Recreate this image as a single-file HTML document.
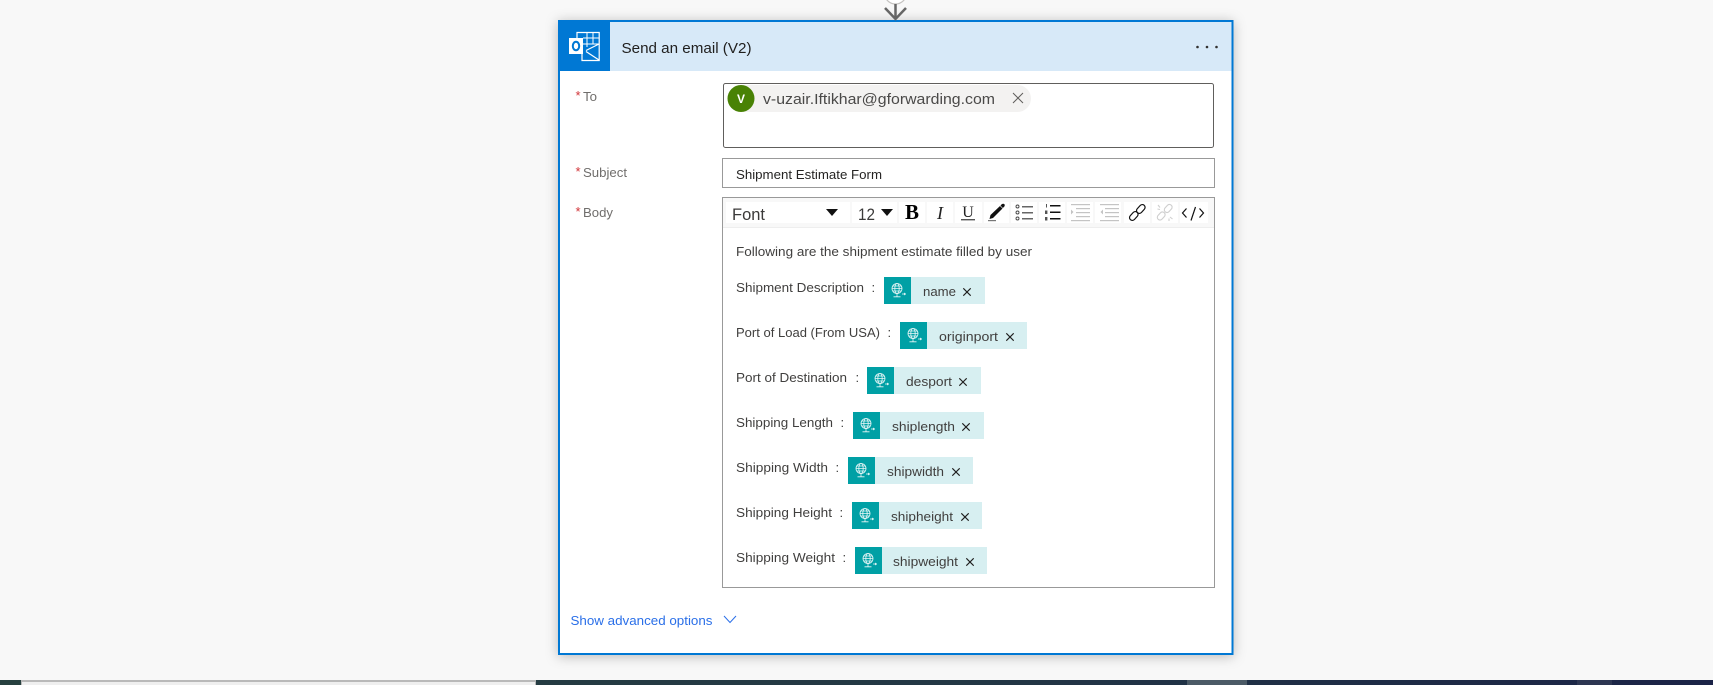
<!DOCTYPE html>
<html lang="en">
<head>
<meta charset="utf-8">
<title>Send an email (V2)</title>
<style>
html,body{margin:0;padding:0;width:1713px;height:685px;overflow:hidden;background:#f8f8f8}
svg{display:block}
text{font-family:"Liberation Sans",Arial,sans-serif;fill:#403f3e;font-size:13px}
</style>
</head>
<body>
<svg width="1713" height="685" viewBox="0 0 1713 685" xmlns="http://www.w3.org/2000/svg">
<defs>
<filter id="sh" x="-10%" y="-10%" width="120%" height="120%"><feDropShadow dx="0" dy="1.5" stdDeviation="6" flood-color="#000" flood-opacity=".26"/></filter>
<linearGradient id="bar" x1="0" x2="1"><stop offset="0" stop-color="#27403f"/><stop offset=".55" stop-color="#233845"/><stop offset="1" stop-color="#1b2347"/></linearGradient>
<g id="globe" fill="none" stroke="#fff" stroke-width=".8" opacity=".92">
<circle cx="0" cy="-1.5" r="5"/><ellipse cx="0" cy="-1.5" rx="2.2" ry="5"/><path d="M-5-1.5H5M-4.2-4H4.2M-4.2 1H4.2M0 3.5V6.5M-3.5 6.8H3.5M5 4H8.5M7.2 2.9L8.5 4L7.2 5.1"/>
</g>
<g id="x" fill="none" stroke="#201f1e" stroke-width="1.1"><path d="M-3.7-3.7L3.7 3.7M3.7-3.7L-3.7 3.7"/></g>
</defs>
<rect width="1713" height="685" fill="#f8f8f8"/>

<!-- connector -->
<circle cx="895.5" cy="-7" r="11" fill="#fff" stroke="#c4c2c0" stroke-width="1.2"/>

<!-- card -->
<rect x="559" y="21" width="673.5" height="633" fill="#fff" stroke="#0078d4" stroke-width="2" filter="url(#sh)"/>
<path d="M895.5 4V19.5M885 8L895.5 19L906 8" fill="none" stroke="#666" stroke-width="2.5"/>
<rect x="610" y="22" width="621.5" height="49" fill="#d7e9f8"/>
<rect x="560" y="22" width="50" height="49" fill="#0078d4"/>

<!-- Outlook icon -->
<g fill="none" stroke="#fff" stroke-width="1.2">
<path d="M577 38V32.5H599.2V60.5H582V53"/>
<path d="M587 32.5V47M593 32.5V44.5M583 38H599M583 44H599" stroke-width="1"/>
<path d="M586 50.5L599 44M586 51.5L599 60"/>
</g>
<rect x="569" y="38" width="14" height="16" fill="#fff"/>
<ellipse cx="576" cy="46" rx="3.2" ry="4.2" fill="none" stroke="#0078d4" stroke-width="2"/>

<text x="621.5" y="53" style="font-size:14.5px;fill:#201f1e" textLength="130" lengthAdjust="spacingAndGlyphs">Send an email (V2)</text>
<g fill="#323130"><circle cx="1197.5" cy="47" r="1.3"/><circle cx="1207" cy="47" r="1.3"/><circle cx="1216.5" cy="47" r="1.3"/></g>

<!-- labels -->
<text x="575.5" y="100" style="font-size:13px;fill:#d13438">*</text>
<text x="583" y="101" style="fill:#706e6c" textLength="14" lengthAdjust="spacingAndGlyphs">To</text>
<text x="575.5" y="176" style="font-size:13px;fill:#d13438">*</text>
<text x="583" y="177" style="fill:#706e6c" textLength="44" lengthAdjust="spacingAndGlyphs">Subject</text>
<text x="575.5" y="216" style="font-size:13px;fill:#d13438">*</text>
<text x="583" y="217" style="fill:#706e6c" textLength="30" lengthAdjust="spacingAndGlyphs">Body</text>

<!-- To field -->
<rect x="723.5" y="83.5" width="490" height="64" rx="2" fill="#fff" stroke="#605e5c"/>
<rect x="727.5" y="85" width="303.5" height="27" rx="13.5" fill="#f3f2f1"/>
<circle cx="741" cy="98.5" r="13.5" fill="#498205"/>
<text x="741" y="103" text-anchor="middle" style="font-size:12px;font-weight:bold;fill:#fff">V</text>
<text x="763" y="104" style="font-size:15px;fill:#4a4948" textLength="232" lengthAdjust="spacingAndGlyphs">v-uzair.Iftikhar@gforwarding.com</text>
<path d="M1013 93L1023 103M1023 93L1013 103" fill="none" stroke="#605e5c" stroke-width="1"/>

<!-- Subject -->
<rect x="722.5" y="158.5" width="492" height="29" fill="#fff" stroke="#999"/>
<text x="736" y="179" style="font-size:13px;fill:#252423" textLength="146" lengthAdjust="spacingAndGlyphs">Shipment Estimate Form</text>

<!-- Body -->
<rect x="722.5" y="197.5" width="492" height="390" fill="#fff" stroke="#999"/>
<rect x="723" y="198" width="491" height="29" fill="#f8f8f8"/>
<rect x="723" y="227" width="491" height="1" fill="#eeeeee"/>
<g fill="#fff">
<rect x="726" y="202" width="124" height="21"/><rect x="852" y="202" width="45" height="21"/>
<rect x="899" y="202" width="26" height="21"/><rect x="927" y="202" width="26" height="21"/><rect x="955" y="202" width="27" height="21"/>
<rect x="984" y="202" width="25" height="21"/><rect x="1011" y="202" width="26" height="21"/><rect x="1039" y="202" width="26" height="21"/>
<rect x="1067" y="202" width="26" height="21"/><rect x="1095" y="202" width="26" height="21"/><rect x="1124" y="202" width="26" height="21"/>
<rect x="1152" y="202" width="26" height="21"/><rect x="1180" y="202" width="28" height="21"/>
</g>
<text x="732" y="220" style="font-size:17px;fill:#3b3a39" textLength="33" lengthAdjust="spacingAndGlyphs">Font</text>
<path d="M826 209H838L832 216Z" fill="#111"/>
<text x="858" y="220" style="font-size:17px;fill:#3b3a39" textLength="17" lengthAdjust="spacingAndGlyphs">12</text>
<path d="M881 209H893L887 216Z" fill="#111"/>
<text x="912" y="219" text-anchor="middle" style="font-family:'Liberation Serif',serif;font-size:21px;font-weight:bold;fill:#000">B</text>
<text x="940" y="219" text-anchor="middle" style="font-family:'Liberation Serif',serif;font-size:18px;font-style:italic;fill:#222">I</text>
<text x="968" y="217" text-anchor="middle" style="font-family:'Liberation Serif',serif;font-size:16px;fill:#222">U</text>
<rect x="961" y="219" width="14" height="1.4" fill="#555"/>
<!-- pencil -->
<path d="M990.5 215L1000 206L1002.5 208.5L993 218L989.5 219Z" fill="#111"/>
<path d="M1000.5 205.5L1002 204Q1003.5 203.3 1004.5 204.3Q1005.2 205.5 1004.2 206.8L1002.8 208Z" fill="#111"/>
<rect x="988" y="220" width="8" height="1.2" fill="#777"/>
<!-- bullets -->
<g fill="none" stroke="#444" stroke-width=".9"><circle cx="1017.5" cy="206.5" r="1.5"/><circle cx="1017.5" cy="212.5" r="1.5"/><circle cx="1017.5" cy="218.5" r="1.5"/></g>
<g fill="#666"><rect x="1022" y="206" width="11" height="1.5"/><rect x="1022" y="212" width="11" height="1.5"/><rect x="1022" y="218" width="11" height="1.5"/></g>
<!-- numbers -->
<g fill="#111"><rect x="1050" y="205" width="10.5" height="1.5"/><rect x="1050" y="211.5" width="10.5" height="1.5"/><rect x="1050" y="218" width="10.5" height="1.5"/></g>
<g fill="#555"><rect x="1046" y="204" width="1" height="3.5"/><rect x="1045" y="210.5" width="2.4" height="3.5"/><rect x="1045" y="217" width="2.4" height="3.5"/></g>
<!-- indent -->
<g fill="#c4c4c4"><rect x="1071" y="204" width="19" height="1.2"/><rect x="1076" y="208" width="14" height="1.2"/><rect x="1076" y="212" width="14" height="1.2"/><rect x="1076" y="216" width="14" height="1.2"/><rect x="1071" y="220" width="19" height="1.2"/>
<path d="M1071 209.5L1073.5 212L1071 214.5Z"/>
<rect x="1100" y="204" width="19" height="1.2"/><rect x="1105" y="208" width="14" height="1.2"/><rect x="1105" y="212" width="14" height="1.2"/><rect x="1105" y="216" width="14" height="1.2"/><rect x="1100" y="220" width="19" height="1.2"/>
<path d="M1103 209.5L1100.5 212L1103 214.5Z"/></g>
<!-- link -->
<g fill="none" stroke="#111" stroke-width="1.2">
<rect x="1138" y="204" width="5.6" height="10" rx="2.8" transform="rotate(42 1140.8 209)"/>
<rect x="1131" y="211" width="5.6" height="10" rx="2.8" transform="rotate(42 1133.8 216)"/>
</g>
<g fill="none" stroke="#cfcfcf" stroke-width="1.1">
<rect x="1165.5" y="204" width="5.4" height="9" rx="2.7" transform="rotate(42 1168.2 208.5)"/>
<rect x="1158.5" y="211.5" width="5.4" height="9" rx="2.7" transform="rotate(42 1161.2 216)"/>
<path d="M1158 205L1160 207.5M1170 217L1172.5 219M1157.5 209L1160 209.5M1169 221L1169 218.5"/>
</g>
<!-- code -->
<path d="M1186.5 208.5L1182.5 213L1186.5 217.5M1199.5 208.5L1203.5 213L1199.5 217.5M1195.5 207L1191 220.5" fill="none" stroke="#111" stroke-width="1.2"/>

<!-- body content -->
<text x="736" y="256" textLength="296" lengthAdjust="spacingAndGlyphs">Following are the shipment estimate filled by user</text>

<!-- rows -->
<text x="736" y="292" textLength="128" lengthAdjust="spacingAndGlyphs">Shipment Description</text><text x="871.5" y="292">:</text>
<rect x="884" y="277" width="101" height="27" fill="#d7eff1"/><rect x="884" y="277" width="27" height="27" fill="#00a0a5"/>
<use href="#globe" x="897" y="290"/><text x="923" y="296" textLength="33" lengthAdjust="spacingAndGlyphs">name</text><use href="#x" x="967" y="292"/>

<text x="736" y="337" textLength="144" lengthAdjust="spacingAndGlyphs">Port of Load (From USA)</text><text x="887.5" y="337">:</text>
<rect x="900" y="322" width="127" height="27" fill="#d7eff1"/><rect x="900" y="322" width="27" height="27" fill="#00a0a5"/>
<use href="#globe" x="913" y="335"/><text x="939" y="341" textLength="59" lengthAdjust="spacingAndGlyphs">originport</text><use href="#x" x="1010" y="337"/>

<text x="736" y="382" textLength="111" lengthAdjust="spacingAndGlyphs">Port of Destination</text><text x="855.5" y="382">:</text>
<rect x="867" y="367" width="114" height="27" fill="#d7eff1"/><rect x="867" y="367" width="27" height="27" fill="#00a0a5"/>
<use href="#globe" x="880" y="380"/><text x="906" y="386" textLength="46" lengthAdjust="spacingAndGlyphs">desport</text><use href="#x" x="963" y="382"/>

<text x="736" y="427" textLength="97" lengthAdjust="spacingAndGlyphs">Shipping Length</text><text x="840.5" y="427">:</text>
<rect x="853" y="412" width="131" height="27" fill="#d7eff1"/><rect x="853" y="412" width="27" height="27" fill="#00a0a5"/>
<use href="#globe" x="866" y="425"/><text x="892" y="431" textLength="63" lengthAdjust="spacingAndGlyphs">shiplength</text><use href="#x" x="966" y="427"/>

<text x="736" y="472" textLength="92" lengthAdjust="spacingAndGlyphs">Shipping Width</text><text x="835.5" y="472">:</text>
<rect x="848" y="457" width="125" height="27" fill="#d7eff1"/><rect x="848" y="457" width="27" height="27" fill="#00a0a5"/>
<use href="#globe" x="861" y="470"/><text x="887" y="476" textLength="57" lengthAdjust="spacingAndGlyphs">shipwidth</text><use href="#x" x="956" y="472"/>

<text x="736" y="517" textLength="96" lengthAdjust="spacingAndGlyphs">Shipping Height</text><text x="839.5" y="517">:</text>
<rect x="852" y="502" width="130" height="27" fill="#d7eff1"/><rect x="852" y="502" width="27" height="27" fill="#00a0a5"/>
<use href="#globe" x="865" y="515"/><text x="891" y="521" textLength="62" lengthAdjust="spacingAndGlyphs">shipheight</text><use href="#x" x="965" y="517"/>

<text x="736" y="562" textLength="99" lengthAdjust="spacingAndGlyphs">Shipping Weight</text><text x="842.5" y="562">:</text>
<rect x="855" y="547" width="132" height="27" fill="#d7eff1"/><rect x="855" y="547" width="27" height="27" fill="#00a0a5"/>
<use href="#globe" x="868" y="560"/><text x="893" y="566" textLength="65" lengthAdjust="spacingAndGlyphs">shipweight</text><use href="#x" x="970" y="562"/>

<!-- advanced -->
<text x="570.5" y="625" style="fill:#2a6fe8" textLength="142" lengthAdjust="spacingAndGlyphs">Show advanced options</text>
<path d="M724 616L730 622.5L736 616" fill="none" stroke="#2a6fe8" stroke-width="1"/>

<!-- bottom bar -->
<rect x="0" y="680" width="1713" height="5" fill="url(#bar)"/>
<rect x="21" y="680" width="515" height="5" fill="#efefef"/>
<rect x="21" y="680" width="515" height="2" fill="#b9b9b9"/>
<rect x="21" y="680" width="1" height="5" fill="#b9b9b9"/><rect x="535" y="680" width="1" height="5" fill="#b9b9b9"/>
<rect x="1187" y="680" width="60" height="5" fill="#4b5a66"/>
<rect x="1577" y="680" width="35" height="5" fill="#2d3652"/>
</svg>
</body>
</html>
